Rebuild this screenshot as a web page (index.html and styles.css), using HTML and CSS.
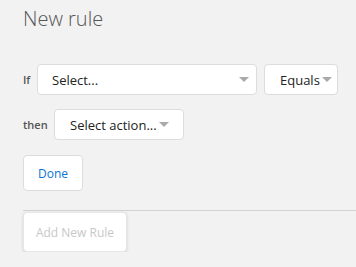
FILE: index.html
```html
<!DOCTYPE html>
<html>
<head>
<meta charset="utf-8">
<link rel="stylesheet" href="styles.css">
</head>
<body>
<div class="page">
  <h1 class="title">New rule</h1>
  <div class="rule-row row-if">
    <span class="label label-if">If</span>
    <div class="select select-field"><span class="select-text">Select...</span><span class="caret"></span></div>
    <div class="select select-op"><span class="select-text">Equals</span><span class="caret"></span></div>
  </div>
  <div class="rule-row row-then">
    <span class="label label-then">then</span>
    <div class="select select-action"><span class="select-text">Select action...</span><span class="caret"></span></div>
  </div>
  <button class="btn btn-done">Done</button>
  <hr class="divider">
  <button class="btn btn-add">Add New Rule</button>
</div>
</body>
</html>
```

FILE: styles.css
```css
html, body {
  margin: 0;
  padding: 0;
  background: #f2f2f2;
  font-family: "Open Sans", "Noto Sans", sans-serif;
  color: #222;
}
.page {
  padding: 4px 0 0 23px;
}
.title {
  margin: 0;
  font-size: 20px;
  font-weight: 300;
  line-height: 30px;
  color: #555;
}
.rule-row {
  display: flex;
  align-items: center;
}
.row-if {
  margin-top: 30px;
}
.row-then {
  margin-top: 14px;
}
.label {
  font-size: 11px;
  font-weight: 600;
  color: #555;
}
.label-if { width: 14px; }
.label-then { width: 31px; }
.select {
  box-sizing: border-box;
  height: 31px;
  background: #fff;
  border: 1px solid #dcdcdc;
  border-radius: 4px;
  display: flex;
  align-items: center;
  font-size: 13px;
  color: #222;
}
.select-field {
  width: 220px;
  padding-left: 14px;
}
.select-field .caret { margin-left: auto; margin-right: 7px; }
.select-op {
  width: 74px;
  margin-left: 7px;
  padding-left: 15px;
}
.select-action {
  width: 130px;
  padding-left: 15px;
}
.caret {
  width: 0;
  height: 0;
  border-left: 5px solid transparent;
  border-right: 5px solid transparent;
  border-top: 5px solid #aaa;
  margin-left: 2px;
}
.btn {
  display: block;
  box-sizing: border-box;
  background: #fff;
  border: 1px solid #dcdcdc;
  border-radius: 4px;
  font-family: inherit;
  padding: 0;
}
.btn-done {
  width: 60px;
  height: 36px;
  margin-top: 15px;
  font-size: 12px;
  color: #0a74d6;
}
.divider {
  margin: 19px 0 0 0;
  border: 0;
  border-top: 1px solid #d2d2d2;
  height: 0;
}
.btn-add {
  width: 104px;
  height: 40px;
  margin-top: 1px;
  font-size: 12px;
  color: #c8c8c8;
  border-color: #e6e6e6;
  box-shadow: 0 1px 3px rgba(0,0,0,0.15);
}
```
